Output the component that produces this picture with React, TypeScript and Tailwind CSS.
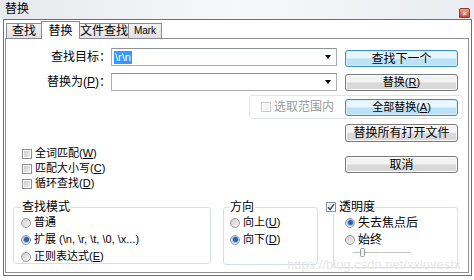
import type { ReactNode } from "react";

function CheckBox({ checked = false, disabled = false }: { checked?: boolean; disabled?: boolean }) {
  return (
    <span
      className={`flex h-[10px] w-[10px] shrink-0 items-center justify-center border shadow-[inset_0_0_0_1px_#ffffff] ${
        disabled
          ? "border-[#c9c9c9] bg-[#f4f4f4]"
          : checked
            ? "border-[#8e8f8f] bg-linear-to-br from-[#e8e8e8] to-[#ffffff]"
            : "border-[#8e8f8f] bg-linear-to-br from-[#c8c8c8] to-[#f2f2f2]"
      }`}
    >
      {checked && (
        <svg width="8" height="8" viewBox="0 0 8 8">
          <path d="M1 4.2 L3.1 6.6 L7 1" fill="none" stroke="#2b4d92" strokeWidth="1.5" />
        </svg>
      )}
    </span>
  );
}

function Radio({ checked = false }: { checked?: boolean }) {
  return (
    <span className="flex h-[10px] w-[10px] shrink-0 items-center justify-center rounded-full border border-[#9a9a9a] bg-linear-to-br from-[#cdcdcd] to-[#f7f7f7]">
      {checked && <span className="h-[5px] w-[5px] rounded-full bg-[#2a62a8] shadow-[0_0_0_1px_#9cc3ea]" />}
    </span>
  );
}

function Combo({ children }: { children?: ReactNode }) {
  return (
    <div className="flex h-[18px] w-[226px] items-center border border-[#abadb3] border-t-[#8e939b] bg-white pl-[2px] pr-[5px]">
      <div className="flex flex-1 items-center">{children}</div>
      <svg width="6" height="4" viewBox="0 0 6 4">
        <path d="M0 0H6L3 4Z" fill="#000" />
      </svg>
    </div>
  );
}

function Button({ children, primary = false, className = "" }: { children: ReactNode; primary?: boolean; className?: string }) {
  return (
    <div
      className={`flex h-[17px] w-[113px] items-center justify-center rounded-[3px] border text-[11px] leading-none text-black ${
        primary
          ? "border-[#3c8dc9] bg-linear-to-b from-[#eaf6fd] from-45% to-[#b9e1f8] to-55% shadow-[inset_0_0_0_1px_#d9f0fc]"
          : "border-[#7a7a7a] bg-linear-to-b from-[#f3f3f3] from-45% to-[#d9d9d9] to-55% shadow-[inset_0_0_0_1px_#fbfbfb]"
      } ${className}`}
    >
      {children}
    </div>
  );
}

function Row({ children, className = "" }: { children: ReactNode; className?: string }) {
  return <div className={`flex items-center gap-[3px] ${className}`}>{children}</div>;
}

export default function App() {
  return (
    <div className="relative h-[280px] w-[474px] overflow-hidden bg-white font-['Liberation_Sans','Noto_Sans_CJK_SC',sans-serif] text-[11px] text-black">
      {/* title bar */}
      <div className="flex h-[19px] items-start justify-between bg-linear-to-r from-[#e6e9ed] via-[#f7f8f9] to-[#e9ecf0] pl-[5px] pr-[4px]">
        <span className="mt-[2px] text-[12px] leading-[14px]">替换</span>
        <div className="mt-[8px] flex h-[10px] w-[11px] items-center justify-center rounded-t-[2px] border border-[#8d3a2c] bg-linear-to-b from-[#e9a190] to-[#c54a33] text-[7px] leading-none font-bold text-white">
          ×
        </div>
      </div>

      {/* window body */}
      <div className="ml-[3px] h-[257px] w-[469px] border border-[#6f6f6f] bg-white">
        {/* tabs */}
        <div className="relative z-10 -mb-[1px] flex h-[19px] items-end pl-[2px]">
          <div className="flex h-[16px] w-[36px] items-center justify-center border border-[#898c95] bg-linear-to-b from-[#f3f3f3] to-[#e1e1e1] text-[12px] leading-none">
            查找
          </div>
          <div className="-ml-[1px] flex h-[18px] w-[39px] items-start justify-center border border-b-0 border-[#898c95] bg-white pt-[3px] text-[12px] leading-none">
            替换
          </div>
          <div className="-ml-[1px] flex h-[16px] w-[50px] items-center justify-center border border-[#898c95] bg-linear-to-b from-[#f3f3f3] to-[#e1e1e1] text-[12px] leading-none">
            文件查找
          </div>
          <div className="-ml-[1px] flex h-[16px] w-[34px] items-center justify-center border border-[#898c95] bg-linear-to-b from-[#f3f3f3] to-[#e1e1e1] text-[10px] leading-none">
            Mark
          </div>
        </div>

        {/* panel */}
        <div className="ml-[1px] h-[235px] w-[464px] border border-[#8e8f8f] bg-white">
          <div className="flex">
            {/* left area */}
            <div className="w-[339px] shrink-0">
              <div className="mt-[9px] flex items-center">
                <span className="w-[105px] text-right text-[12px] leading-none">查找目标：</span>
                <Combo>
                  <span className="bg-[#3399ff] px-[1px] text-[11px] leading-[13px] text-white">{"\\r\\n"}</span>
                </Combo>
              </div>
              <div className="mt-[7px] flex items-center">
                <span className="w-[105px] text-right text-[12px] leading-none">
                  替换为(<span className="underline">P</span>)：
                </span>
                <Combo />
              </div>
              {/* the range box runs on under the button column */}
              <div className="mt-[4px] ml-[243px] flex h-[24px] w-[214px] items-center gap-[3px] rounded-[3px] border border-[#dfe5ea] pl-[11px] text-[12px] leading-none text-[#9a9a9a]">
                <CheckBox disabled />
                选取范围内
              </div>
              <div className="mt-[27px] ml-[16px]">
                <Row className="h-[15px]">
                  <CheckBox />
                  <span>
                    全词匹配(<span className="underline">W</span>)
                  </span>
                </Row>
                <Row className="h-[15px]">
                  <CheckBox />
                  <span>
                    匹配大小写(<span className="underline">C</span>)
                  </span>
                </Row>
                <Row className="h-[15px]">
                  <CheckBox />
                  <span>
                    循环查找(<span className="underline">D</span>)
                  </span>
                </Row>
              </div>
            </div>

            {/* buttons */}
            <div className="relative flex flex-col">
              <Button primary className="mt-[11px] text-[12px]">
                查找下一个
              </Button>
              <Button className="mt-[7px]">
                替换(<span className="underline">R</span>)
              </Button>
              <Button primary className="mt-[8px]">
                全部替换(<span className="underline">A</span>)
              </Button>
              <Button className="mt-[8px] h-[18px] text-[12px]">替换所有打开文件</Button>
              <Button className="mt-[14px] text-[12px]">取消</Button>
            </div>
          </div>

          {/* group boxes */}
          <div className="mt-[9px] ml-[7px] flex items-start">
            <fieldset className="h-[64px] w-[198px] rounded-[3px] border border-[#d5dfe5]">
              <legend className="ml-[7px] px-[1px] text-[12px] leading-[14px]">查找模式</legend>
              <div className="pl-[7px]">
                <Row className="h-[17px]">
                  <Radio />
                  <span>普通</span>
                </Row>
                <Row className="h-[17px]">
                  <Radio checked />
                  <span>扩展 (\n, \r, \t, \0, \x...)</span>
                </Row>
                <Row className="h-[17px]">
                  <Radio />
                  <span>
                    正则表达式(<span className="underline">E</span>)
                  </span>
                </Row>
              </div>
            </fieldset>

            <fieldset className="ml-[12px] h-[65px] w-[95px] rounded-[3px] border border-[#d5dfe5]">
              <legend className="ml-[5px] px-[1px] text-[12px] leading-[14px]">方向</legend>
              <div className="pl-[6px]">
                <Row className="h-[17px]">
                  <Radio />
                  <span>
                    向上(<span className="underline">U</span>)
                  </span>
                </Row>
                <Row className="h-[17px]">
                  <Radio checked />
                  <span>
                    向下(<span className="underline">D</span>)
                  </span>
                </Row>
              </div>
            </fieldset>

            <fieldset className="ml-[15px] h-[68px] w-[125px] rounded-[3px] border border-[#d5dfe5]">
              <legend className="-ml-[8px] flex items-center gap-[3px] text-[12px] leading-[14px]">
                <CheckBox checked />
                透明度
              </legend>
              <div className="pl-[11px]">
                <Row className="h-[17px]">
                  <Radio checked />
                  <span className="text-[12px]">失去焦点后</span>
                </Row>
                <Row className="h-[17px]">
                  <Radio />
                  <span className="text-[12px]">始终</span>
                </Row>
                <svg width="60" height="10" viewBox="0 0 60 10" className="ml-[8px]">
                  <line x1="0" y1="4.5" x2="58" y2="4.5" stroke="#c4c4c4" strokeWidth="1" />
                  <rect x="7.5" y="0.5" width="4" height="8" rx="1" fill="#f4f4f4" stroke="#9a9a9a" />
                </svg>
              </div>
            </fieldset>
          </div>
        </div>
      </div>

      {/* watermark */}
      <div className="pointer-events-none absolute top-[258px] left-[287px] text-[13px] leading-none text-[#e6e6e6]">
        https://blog.csdn.net/xxloveshi
      </div>
    </div>
  );
}
